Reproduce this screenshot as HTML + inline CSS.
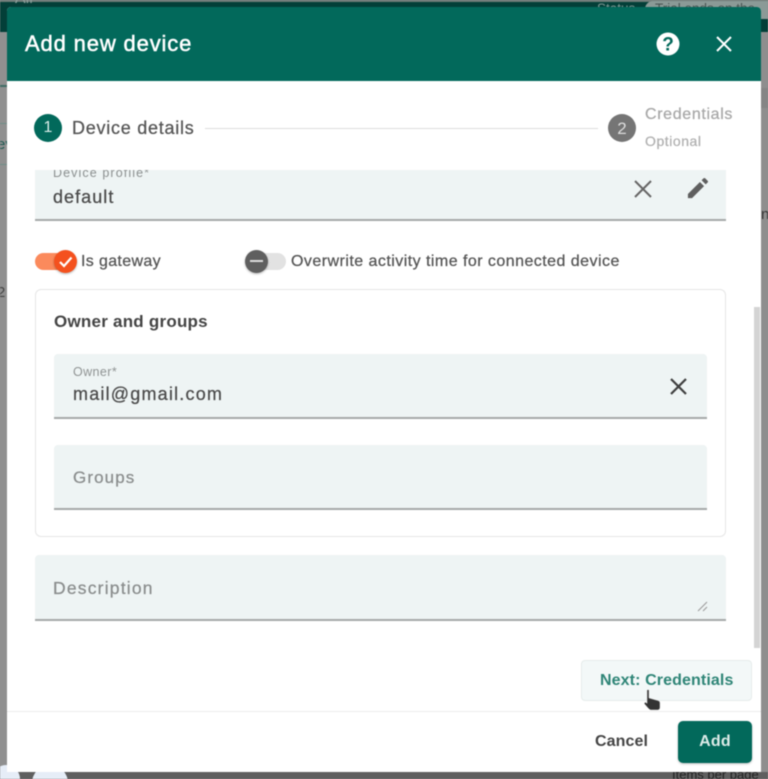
<!DOCTYPE html>
<html><head><meta charset="utf-8">
<style>
html,body{margin:0;padding:0;width:768px;height:779px;overflow:hidden;background:#909090;}
body{position:relative;font-family:"Liberation Sans",sans-serif;}
#p{position:absolute;left:0;top:0;width:768px;height:779px;overflow:hidden;filter:blur(0.55px);background:#909090;}
#p div,#p svg,#p span.t{position:absolute;}
.t{white-space:nowrap;line-height:1;}
.s{-webkit-text-stroke:.25px currentColor;}
.f{background:#eef4f4;border-radius:4px 4px 0 0;border-bottom:2px solid #a6a9a9;box-sizing:border-box;}
</style></head><body><div id="p">
<!-- backdrop -->
<div style="left:0;top:0;width:768px;height:2px;background:#6d7a76"></div>
<div style="left:0;top:2px;width:768px;height:30px;background:#033f38"></div>
<div style="left:645px;top:1px;width:123px;height:18px;background:#8b9a97;border-radius:8px 0 0 8px"></div>
<span class="t" style="left:597px;top:2px;font-size:13.500px;color:#7b9490">Status</span>
<span class="t" style="left:655px;top:2px;font-size:13.500px;color:#4a5654">Trial ends on the</span>
<span class="t" style="left:15px;top:-9px;font-size:16px;color:#8da09c">All</span>
<div style="left:0;top:32px;width:7px;height:747px;background:#909090"></div>
<div style="left:761px;top:32px;width:7px;height:747px;background:#8e8e8e"></div>
<div style="left:0;top:85px;width:7px;height:2px;background:#3f6d66"></div>
<div style="left:0;top:123px;width:7px;height:1px;background:#6f8f89"></div>
<div style="left:0;top:164px;width:7px;height:1px;background:#6f8f89"></div>
<span class="t" style="left:-3px;top:137px;font-size:15px;color:#1f5a52">ev</span>
<span class="t" style="left:-3px;top:285px;font-size:15px;color:#444">2</span>
<div style="left:761px;top:88px;width:7px;height:20px;background:#858585"></div>
<span class="t" style="left:761px;top:207px;font-size:15px;color:#333">n</span>
<div style="left:0;top:772px;width:768px;height:7px;background:#5f5f5f"></div>
<div style="left:-8px;top:765px;width:28px;height:28px;border-radius:50%;background:#e6edf7"></div>
<div style="left:32px;top:765px;width:36px;height:36px;border-radius:50%;background:#e6edf7"></div>
<span class="t" style="left:672px;top:768px;font-size:13px;color:#222">Items per page</span>
<!-- dialog -->
<div style="left:7px;top:7px;width:754px;height:765px;background:#fff;border-radius:4px 4px 0 0;overflow:hidden">
  <div style="left:0;top:0;width:754px;height:74px;background:#02695b"></div>
</div>
<span class="t" style="left:25px;top:33px;font-size:22px;color:#fff;-webkit-text-stroke:.5px #fff;letter-spacing:.85px">Add new device</span>
<svg style="left:656px;top:32px" width="24" height="24" viewBox="0 0 24 24"><path fill="#fff" d="M12 0.500a11.500 11.500 0 1 0 0 23a11.500 11.500 0 0 0 0-23z"/><text x="12" y="18.500" font-family="Liberation Sans" font-weight="700" font-size="19" text-anchor="middle" fill="#02695b">?</text></svg>
<svg style="left:714px;top:34px" width="20" height="20" viewBox="0 0 20 20"><path d="M3 3L17 17M17 3L3 17" stroke="#fff" stroke-width="2" fill="none"/></svg>
<!-- stepper -->
<div style="left:34px;top:114px;width:28px;height:28px;border-radius:50%;background:#02695b"></div>
<span class="t" style="left:34px;top:120px;width:28px;text-align:center;font-size:16px;color:#d8ebe8">1</span>
<span class="t s" style="left:72px;top:119px;font-size:18px;color:#555;letter-spacing:.75px">Device details</span>
<div style="left:205px;top:128px;width:393px;height:1px;background:#dcdcdc"></div>
<div style="left:608px;top:114px;width:28px;height:28px;border-radius:50%;background:#757575"></div>
<span class="t" style="left:608px;top:120px;width:28px;text-align:center;font-size:17px;color:#ddd">2</span>
<span class="t s" style="left:645px;top:107px;font-size:16px;color:#a8a8a8;letter-spacing:.65px">Credentials</span>
<span class="t s" style="left:645px;top:134px;font-size:14px;color:#b0b0b0;letter-spacing:.55px">Optional</span>
<!-- device profile -->
<div class="f" style="left:35px;top:170px;width:691px;height:51px;border-radius:0"></div>
<div style="left:35px;top:158px;width:691px;height:12px;background:#fff"></div>
<span class="t" style="left:53px;top:167px;font-size:12.500px;color:#8b8f8f;letter-spacing:1.100px;clip-path:inset(3px 0 0 0)">Device profile*</span>
<span class="t s" style="left:53px;top:188px;font-size:18px;color:#4a4a4a;letter-spacing:1.050px">default</span>
<svg style="left:633px;top:179px" width="20" height="20" viewBox="0 0 20 20"><path d="M2 2L18 18M18 2L2 18" stroke="#666" stroke-width="2" fill="none"/></svg>
<svg style="left:687px;top:177px" width="22" height="22" viewBox="0 0 24 24"><path fill="#5f5f5f" d="M1 18.500V23h4.500L18.600 9.900l-4.500-4.500zM22.600 5.900c.5-.5.5-1.200 0-1.700L19.800 1.400c-.5-.5-1.200-.5-1.700 0l-2.200 2.200 4.500 4.500z"/></svg>
<!-- toggles -->
<div style="left:35px;top:253px;width:40px;height:17px;border-radius:9px;background:#fb8a5c"></div>
<div style="left:54px;top:250px;width:23px;height:23px;border-radius:50%;background:#f4511e;box-shadow:0 1px 2px rgba(0,0,0,.3)"></div>
<svg style="left:54px;top:250px" width="23" height="23" viewBox="0 0 23 23"><path d="M6 12l4 4l7.500-8.500" stroke="#fff" stroke-width="2.200" fill="none"/></svg>
<span class="t s" style="left:81px;top:254px;font-size:16px;color:#555;letter-spacing:.35px">Is gateway</span>
<div style="left:247px;top:253px;width:39px;height:17px;border-radius:9px;background:#e2e2e2"></div>
<div style="left:245px;top:250px;width:23px;height:23px;border-radius:50%;background:#5f5f5f;box-shadow:0 1px 2px rgba(0,0,0,.3)"></div>
<div style="left:250px;top:260px;width:13px;height:2px;background:#ddd"></div>
<span class="t s" style="left:291px;top:254px;font-size:16px;color:#555;letter-spacing:.46px">Overwrite activity time for connected device</span>
<!-- group card -->
<div style="left:35px;top:289px;width:691px;height:248px;box-sizing:border-box;border:1px solid #e6e6e6;border-radius:6px;background:#fff"></div>
<span class="t" style="left:54px;top:313px;font-size:17px;font-weight:700;color:#444;letter-spacing:.23px">Owner and groups</span>
<div class="f" style="left:54px;top:354px;width:653px;height:65px"></div>
<span class="t" style="left:73px;top:366px;font-size:12.500px;color:#8f9393;letter-spacing:.4px">Owner*</span>
<span class="t s" style="left:73px;top:385px;font-size:18px;color:#4a4a4a;letter-spacing:1.200px">mail@gmail.com</span>
<svg style="left:669px;top:377px" width="19" height="19" viewBox="0 0 19 19"><path d="M2 2L17 17M17 2L2 17" stroke="#3f3f3f" stroke-width="2.200" fill="none"/></svg>
<div class="f" style="left:54px;top:445px;width:653px;height:65px"></div>
<span class="t s" style="left:73px;top:469px;font-size:17px;color:#8a8d8d;letter-spacing:1.100px">Groups</span>
<!-- description -->
<div class="f" style="left:35px;top:555px;width:691px;height:66px"></div>
<span class="t s" style="left:53px;top:580px;font-size:17.500px;color:#8a8d8d;letter-spacing:1.200px">Description</span>
<svg style="left:697px;top:601px" width="11" height="11" viewBox="0 0 11 11"><path d="M1 10L10 1M6 10L10 6" stroke="#999" stroke-width="1" fill="none"/></svg>
<!-- scrollbar -->
<div style="left:754px;top:307px;width:6px;height:341px;background:#d4d4d4"></div>
<!-- next -->
<div style="left:581px;top:660px;width:171px;height:41px;box-sizing:border-box;border:1px solid #e6eceb;border-radius:4px;background:#f3f8f8"></div>
<span class="t" style="left:600px;top:673px;font-size:16px;font-weight:700;color:#2f8577;letter-spacing:.11px">Next: Credentials</span>
<svg style="left:644px;top:689px" width="20" height="23" viewBox="0 0 20 23"><path fill="#333" stroke="#ddd" stroke-width=".5" d="M3 1.500c0-1 2-1 2 0V9l7 2c2 .5 4 1 4 3v4c0 2-1 3-3 3H7c-1 0-2-1-3-2L0.500 15c-.5-1 .5-2 1.500-1.500L3 14.500z"/></svg>
<!-- footer -->
<div style="left:7px;top:711px;width:754px;height:1px;background:#ececec"></div>
<span class="t" style="left:595px;top:734px;font-size:16px;font-weight:700;color:#444;letter-spacing:.1px">Cancel</span>
<div style="left:678px;top:721px;width:74px;height:42px;border-radius:5px;background:#02695b;box-shadow:0 1px 2px rgba(0,0,0,.25)"></div>
<span class="t" style="left:678px;top:734px;width:74px;text-align:center;font-size:16px;font-weight:700;color:#dcebe8;letter-spacing:.2px">Add</span>
</div></body></html>
